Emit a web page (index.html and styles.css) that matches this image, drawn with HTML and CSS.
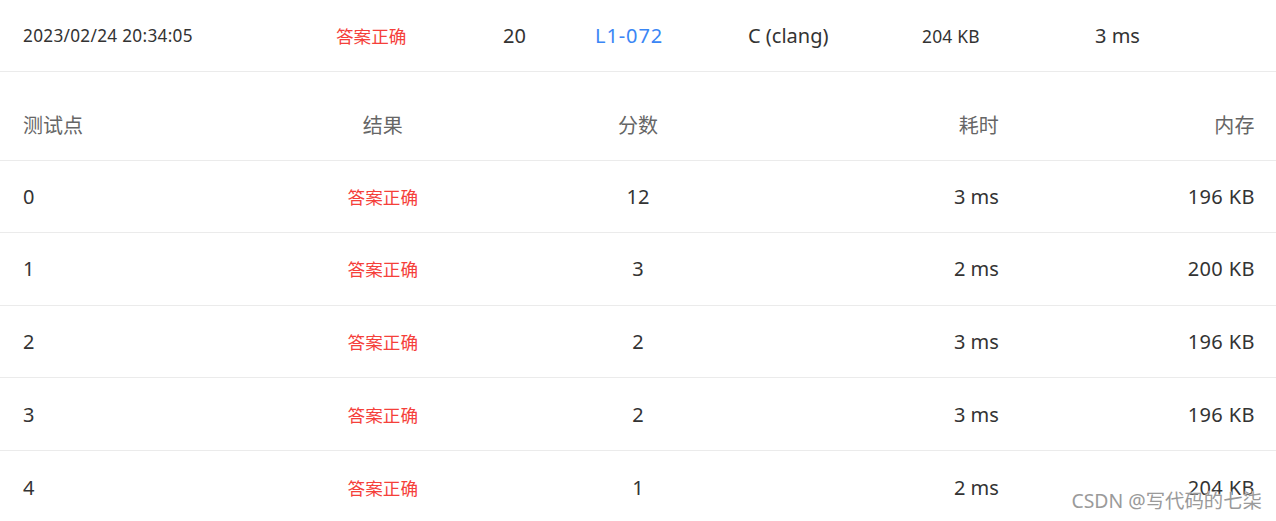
FILE: index.html
```html
<!DOCTYPE html>
<html lang="zh">
<head>
<meta charset="utf-8">
<link rel="stylesheet" href="styles.css">
</head>
<body>
<div class="page">
  <div class="summary">
    <div class="s-cell s-date">2023/02/24 20:34:05</div>
    <div class="s-cell ok">答案正确</div>
    <div class="s-cell">20</div>
    <div class="s-cell link">L1-072</div>
    <div class="s-cell">C (clang)</div>
    <div class="s-cell s-small">204 KB</div>
    <div class="s-cell">3 ms</div>
  </div>
  <div class="table">
    <div class="row head">
      <div class="c c1">测试点</div>
      <div class="c c2">结果</div>
      <div class="c c3">分数</div>
      <div class="c c4">耗时</div>
      <div class="c c5">内存</div>
    </div>
    <div class="row">
      <div class="c c1">0</div>
      <div class="c c2 ok">答案正确</div>
      <div class="c c3">12</div>
      <div class="c c4">3 ms</div>
      <div class="c c5">196 KB</div>
    </div>
    <div class="row">
      <div class="c c1">1</div>
      <div class="c c2 ok">答案正确</div>
      <div class="c c3">3</div>
      <div class="c c4">2 ms</div>
      <div class="c c5">200 KB</div>
    </div>
    <div class="row">
      <div class="c c1">2</div>
      <div class="c c2 ok">答案正确</div>
      <div class="c c3">2</div>
      <div class="c c4">3 ms</div>
      <div class="c c5">196 KB</div>
    </div>
    <div class="row">
      <div class="c c1">3</div>
      <div class="c c2 ok">答案正确</div>
      <div class="c c3">2</div>
      <div class="c c4">3 ms</div>
      <div class="c c5">196 KB</div>
    </div>
    <div class="row last">
      <div class="c c1">4</div>
      <div class="c c2 ok">答案正确</div>
      <div class="c c3">1</div>
      <div class="c c4">2 ms</div>
      <div class="c c5">204 KB</div>
    </div>
  </div>
  <div class="watermark">CSDN @写代码的七柒</div>
</div>
</body>
</html>
```
FILE: styles.css
```css
* { box-sizing: border-box; }
html, body { margin: 0; padding: 0; background: #fff; }
body {
  font-family: "Noto Sans", "Noto Sans CJK SC", sans-serif;
  color: #333;
  overflow: hidden;
}
.page {
  position: relative;
  width: 1276px;
  height: 521px;
  overflow: hidden;
}
.summary {
  display: grid;
  grid-template-columns: 313px 167px 92px 153px 174px 173px 204px;
  height: 72px;
  align-items: center;
  border-bottom: 1px solid #ebebeb;
  font-size: 20px;
}
.s-cell {
  padding-left: 23px;
  white-space: nowrap;
}
.s-date { font-size: 17.2px; letter-spacing: 0.3px; }
.s-small { font-size: 17.4px; letter-spacing: 0.2px; }
.ok { color: #f5403a; font-size: 17.6px; }
.link { color: #3a86f5; letter-spacing: 0.9px; }
.table { display: flex; flex-direction: column; }
.row {
  display: grid;
  grid-template-columns: repeat(5, 1fr);
  height: 72.6px;
  align-items: center;
  border-bottom: 1px solid #ebebeb;
  font-size: 20px;
}
.row.head {
  height: 88.5px;
  padding-top: 17px;
  color: #666;
  font-size: 20px;
}
.row.last { border-bottom: none; }
.c { padding: 0 22px; white-space: nowrap; }
.c1 { text-align: left; padding-left: 23px; }
.c2, .c3 { text-align: center; }
.c4, .c5 { text-align: right; }
.c5 { letter-spacing: 0.4px; padding-right: 21px; }
.watermark {
  position: absolute;
  right: 14px;
  bottom: 7px;
  font-size: 19.4px;
  color: #9a9a9a;
  text-shadow: 0 0 2px #fff, 0 0 1px #fff;
}
```
